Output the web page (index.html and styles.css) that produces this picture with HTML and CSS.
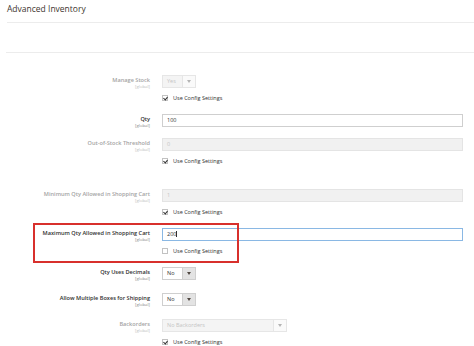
FILE: index.html
```html
<!DOCTYPE html>
<html lang="en">
<head>
    <meta charset="UTF-8">
    <title>Advanced Inventory</title>
    <link rel="stylesheet" href="styles.css">
</head>
<body>
    <h2 class="section-title">Advanced Inventory</h2>
    <div class="section-spacer"></div>

    <div class="fields">
        <div class="field disabled">
            <div class="label">Manage Stock<span class="scope">[global]</span></div>
            <div class="control">
                <div class="select"><span class="value">Yes</span><span class="arrow"><svg viewBox="0 0 4 3"><path d="M0 0h4L2 3z"/></svg></span></div>
                <label class="check"><span class="box checked"></span>Use Config Settings</label>
            </div>
        </div>

        <div class="field compact">
            <div class="label">Qty<span class="scope">[global]</span></div>
            <div class="control">
                <div class="input">100</div>
            </div>
        </div>

        <div class="field disabled wide-gap">
            <div class="label">Out-of-Stock Threshold<span class="scope">[global]</span></div>
            <div class="control">
                <div class="input">0</div>
                <label class="check"><span class="box checked"></span>Use Config Settings</label>
            </div>
        </div>

        <div class="field disabled">
            <div class="label">Minimum Qty Allowed in Shopping Cart<span class="scope">[global]</span></div>
            <div class="control">
                <div class="input">1</div>
                <label class="check"><span class="box checked"></span>Use Config Settings</label>
            </div>
        </div>

        <div class="field highlighted">
            <div class="label">Maximum Qty Allowed in Shopping Cart<span class="scope">[global]</span></div>
            <div class="control">
                <div class="input focus">200<span class="caret"></span></div>
                <label class="check"><span class="box"></span>Use Config Settings</label>
            </div>
            <div class="annotation"></div>
        </div>

        <div class="field">
            <div class="label">Qty Uses Decimals<span class="scope">[global]</span></div>
            <div class="control">
                <div class="select"><span class="value">No</span><span class="arrow"><svg viewBox="0 0 4 3"><path d="M0 0h4L2 3z"/></svg></span></div>
            </div>
        </div>

        <div class="field">
            <div class="label">Allow Multiple Boxes for Shipping<span class="scope">[global]</span></div>
            <div class="control">
                <div class="select"><span class="value">No</span><span class="arrow"><svg viewBox="0 0 4 3"><path d="M0 0h4L2 3z"/></svg></span></div>
            </div>
        </div>

        <div class="field disabled">
            <div class="label">Backorders<span class="scope">[global]</span></div>
            <div class="control">
                <div class="select long"><span class="value">No Backorders</span><span class="arrow"><svg viewBox="0 0 4 3"><path d="M0 0h4L2 3z"/></svg></span></div>
                <label class="check"><span class="box checked"></span>Use Config Settings</label>
            </div>
        </div>
    </div>
</body>
</html>
```

FILE: styles.css
```css
body {
    font-family: "Open Sans", "Noto Sans", sans-serif;
    background-color: #ffffff;
    color: #303030;
    margin: 0;
    padding: 0;
}

.section-title {
    font-size: 8.5px;
    font-weight: normal;
    line-height: 12px;
    color: #41362f;
    margin: 0 0 0 7px;
    padding: 3px 0 7px 0;
    border-bottom: 1px solid #ececec;
}

.section-spacer {
    height: 29px;
    margin-left: 6px;
    border-bottom: 1px solid #ececec;
}

/* Form fields */
.fields {
    padding-top: 22px;
    margin-right: 11px;
}

.field {
    display: grid;
    grid-template-columns: 150px 1fr;
    column-gap: 12px;
    margin-bottom: 12px;
    position: relative;
}

.field.compact { margin-bottom: 10px; }
.field.wide-gap { margin-bottom: 24px; }

.label {
    text-align: right;
    font-size: 5.6px;
    font-weight: 600;
    line-height: 8px;
    padding-top: 1px;
    color: #303030;
}

.scope {
    display: block;
    font-size: 4.3px;
    font-weight: normal;
    line-height: 5px;
    color: #8a8a8a;
}

.disabled .label { color: #a4a4a4; }
.disabled .scope { color: #c0c0c0; }

.input {
    height: 13px;
    box-sizing: border-box;
    border: 1px solid #cfcfcf;
    font-size: 5.5px;
    line-height: 11px;
    padding-left: 4px;
    color: #303030;
}

.disabled .input {
    background-color: #f1f1f1;
    border-color: #e4e4e4;
    color: #c4c4c4;
}

.input.focus { border-color: #8ab8e4; }

.caret {
    display: inline-block;
    width: 0;
    height: 6px;
    border-right: 1px solid #303030;
    vertical-align: -1px;
}

.select {
    display: flex;
    width: 34px;
    height: 13px;
    box-sizing: border-box;
    border: 1px solid #cfcfcf;
    font-size: 5.5px;
    line-height: 11px;
}

.select.long { width: 125px; }

.select .value {
    flex: 1;
    padding-left: 4px;
}

.select .arrow {
    width: 12px;
    display: flex;
    align-items: center;
    justify-content: center;
    background-color: #e3e3e3;
    border-left: 1px solid #cfcfcf;
}

.select .arrow svg {
    width: 4px;
    height: 3px;
    fill: #514943;
}

.disabled .select {
    border-color: #e6e6e6;
    background-color: #f4f4f4;
    color: #c4c4c4;
}

.disabled .select .arrow {
    background-color: #fafafa;
    border-left-color: #e6e6e6;
}

.disabled .select .arrow svg { fill: #b4b4b4; }

.check {
    display: flex;
    align-items: center;
    height: 9px;
    margin-top: 5px;
    font-size: 5.5px;
    color: #303030;
}

.box {
    width: 6px;
    height: 6px;
    box-sizing: border-box;
    border: 1px solid #c2c2c2;
    margin-right: 5px;
    position: relative;
}

.box.checked::after {
    content: "";
    position: absolute;
    left: 1px;
    top: 0;
    width: 2px;
    height: 3px;
    border-right: 1px solid #303030;
    border-bottom: 1px solid #303030;
    transform: rotate(40deg);
}

/* Red annotation frame around the max qty row */
.annotation {
    position: absolute;
    left: 33px;
    top: -5px;
    width: 206px;
    height: 40px;
    box-sizing: border-box;
    border: 2px solid #d8302c;
    pointer-events: none;
}
```
